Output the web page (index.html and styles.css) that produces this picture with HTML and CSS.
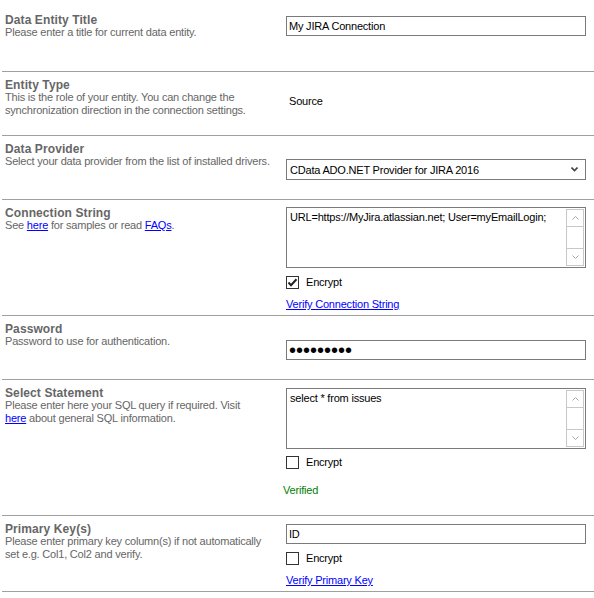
FILE: index.html
```html
<!DOCTYPE html>
<html lang="en">
<head>
  <meta charset="UTF-8" />
  <title>Data Entity Settings</title>
  <link rel="stylesheet" href="styles.css">
</head>
<body>
  <div class="row row-first">
    <div class="info">
      <div class="title">Data Entity Title</div>
      <div class="desc">Please enter a title for current data entity.</div>
    </div>
    <div class="field mt-2">
      <input class="text-input" type="text" value="My JIRA Connection" />
    </div>
  </div>

  <div class="row">
    <div class="info">
      <div class="title">Entity Type</div>
      <div class="desc">This is the role of your entity. You can change the<br>synchronization direction in the connection settings.</div>
    </div>
    <div class="field mt-16">
      <div class="plain-value">Source</div>
    </div>
  </div>

  <div class="row">
    <div class="info">
      <div class="title">Data Provider</div>
      <div class="desc">Select your data provider from the list of installed drivers.</div>
    </div>
    <div class="field mt-16">
      <div class="select-box">
        <span>CData ADO.NET Provider for JIRA 2016</span>
        <svg width="7" height="5" viewBox="0 0 7 5"><polyline points="0.5,0.5 3.5,3.5 6.5,0.5" fill="none" stroke="#444" stroke-width="1.6"/></svg>
      </div>
    </div>
  </div>

  <div class="row row-conn">
    <div class="info">
      <div class="title">Connection String</div>
      <div class="desc">See <a href="#">here</a> for samples or read <a href="#">FAQs</a>.</div>
    </div>
    <div class="field">
      <div class="memo">
        <div class="memo-text">URL=https://MyJira.atlassian.net; User=myEmailLogin;</div>
        <div class="scrollbar">
          <div class="sb-btn sb-up"><svg width="7" height="4" viewBox="0 0 7 4"><polyline points="0.5,3.5 3.5,0.5 6.5,3.5" fill="none" stroke="#a8a8a8" stroke-width="1"/></svg></div>
          <div class="sb-track"></div>
          <div class="sb-btn sb-down"><svg width="7" height="4" viewBox="0 0 7 4"><polyline points="0.5,0.5 3.5,3.5 6.5,0.5" fill="none" stroke="#a8a8a8" stroke-width="1"/></svg></div>
        </div>
      </div>
      <label class="check mt-8">
        <span class="box"><svg width="11" height="11" viewBox="0 0 11 11"><polyline points="1.5,5.5 4,8.2 9.5,2.2" fill="none" stroke="#222" stroke-width="2"/></svg></span>
        Encrypt
      </label>
      <a class="verify mt-9" href="#">Verify Connection String</a>
    </div>
  </div>

  <div class="row">
    <div class="info">
      <div class="title">Password</div>
      <div class="desc">Password to use for authentication.</div>
    </div>
    <div class="field mt-17">
      <input class="text-input pass-input" type="password" value="123456789" />
    </div>
  </div>

  <div class="row row-sql">
    <div class="info">
      <div class="title">Select Statement</div>
      <div class="desc">Please enter here your SQL query if required. Visit<br><a href="#">here</a> about general SQL information.</div>
    </div>
    <div class="field mt-1">
      <div class="memo">
        <div class="memo-text">select * from issues</div>
        <div class="scrollbar">
          <div class="sb-btn sb-up"><svg width="7" height="4" viewBox="0 0 7 4"><polyline points="0.5,3.5 3.5,0.5 6.5,3.5" fill="none" stroke="#a8a8a8" stroke-width="1"/></svg></div>
          <div class="sb-track"></div>
          <div class="sb-btn sb-down"><svg width="7" height="4" viewBox="0 0 7 4"><polyline points="0.5,0.5 3.5,3.5 6.5,0.5" fill="none" stroke="#a8a8a8" stroke-width="1"/></svg></div>
        </div>
      </div>
      <label class="check mt-7">
        <span class="box"></span>
        Encrypt
      </label>
      <div class="verified">Verified</div>
    </div>
  </div>

  <div class="row row-key">
    <div class="info">
      <div class="title">Primary Key(s)</div>
      <div class="desc">Please enter primary key column(s) if not automatically<br>set e.g. Col1, Col2 and verify.</div>
    </div>
    <div class="field mt-1">
      <input class="text-input" type="text" value="ID" />
      <label class="check mt-8">
        <span class="box"></span>
        Encrypt
      </label>
      <a class="verify mt-9" href="#">Verify Primary Key</a>
    </div>
  </div>
</body>
</html>
```

FILE: styles.css
```css
body {
  margin: 0;
  font-family: "Liberation Sans", Arial, sans-serif;
  font-size: 11px;
  letter-spacing: -0.2px;
  color: #000;
  background-color: #fff;
}

a {
  color: #0000ff;
  text-decoration: underline;
}

.row {
  display: flex;
  margin-left: 2px;
  padding-top: 7px;
  min-height: 64px;
  box-sizing: border-box;
  border-bottom: 1px solid #a0a0a0;
}

.row-first {
  padding-top: 14px;
  min-height: 72px;
}

.row-conn {
  min-height: 116px;
}

.row-sql {
  min-height: 136px;
}

.row-key {
  min-height: 76px;
}

.info {
  width: 284px;
  padding-left: 3px;
  box-sizing: border-box;
  white-space: nowrap;
}

.title {
  font-size: 12px;
  font-weight: bold;
  line-height: 12px;
  letter-spacing: 0.1px;
  color: #666;
}

.desc {
  line-height: 13px;
  color: #666;
}

.field {
  width: 300px;
  display: flex;
  flex-direction: column;
  align-items: flex-start;
}

.mt-1 { margin-top: 1px; }
.mt-2 { margin-top: 2px; }
.mt-7 { margin-top: 7px; }
.mt-8 { margin-top: 8px; }
.mt-9 { margin-top: 9px; }
.mt-16 { margin-top: 16px; }
.mt-17 { margin-top: 17px; }

.text-input {
  width: 300px;
  height: 20px;
  margin: 0;
  padding: 0 2px;
  box-sizing: border-box;
  border: 1px solid #7a7a7a;
  font-family: inherit;
  font-size: 11px;
  letter-spacing: -0.2px;
  color: #000;
  outline: none;
}

.pass-input {
  font-size: 20px;
  line-height: 18px;
  letter-spacing: 0;
  padding-left: 2px;
}

.plain-value {
  margin-left: 3px;
  line-height: 13px;
}

.select-box {
  width: 300px;
  height: 21px;
  box-sizing: border-box;
  border: 1px solid #7a7a7a;
  padding: 0 7px 0 3px;
  display: flex;
  align-items: center;
  justify-content: space-between;
}

.memo {
  width: 300px;
  height: 61px;
  box-sizing: border-box;
  border: 1px solid #7a7a7a;
  padding: 1px;
  display: flex;
}

.memo-text {
  flex: 1;
  padding: 2px 0 0 2px;
  line-height: 13px;
}

.scrollbar {
  width: 18px;
  display: flex;
  flex-direction: column;
  box-sizing: border-box;
  border: 1px solid #c8c8c8;
}

.sb-btn {
  height: 16px;
  display: flex;
  align-items: center;
  justify-content: center;
}

.sb-up {
  border-bottom: 1px solid #c8c8c8;
}

.sb-down {
  border-top: 1px solid #c8c8c8;
}

.sb-track {
  flex: 1;
}

.check {
  display: flex;
  align-items: center;
  gap: 7px;
  height: 13px;
  line-height: 13px;
}

.check .box {
  width: 13px;
  height: 13px;
  box-sizing: border-box;
  border: 1px solid #333;
  display: flex;
  align-items: center;
  justify-content: center;
}

.verify {
  line-height: 13px;
}

.verified {
  margin-top: 15px;
  margin-left: -3px;
  line-height: 13px;
  color: #008000;
}
```
